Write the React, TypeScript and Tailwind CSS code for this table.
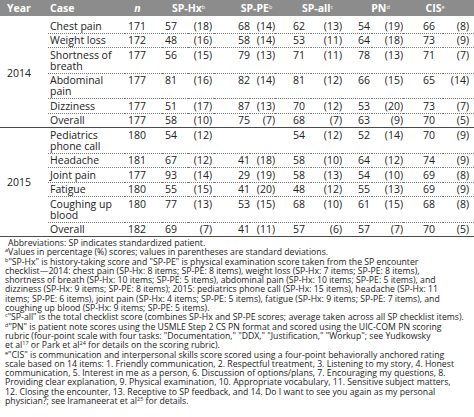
const rows2014 = [
  { name: "Chest pain", n: 171, v: ["57", "(18)", "68", "(14)", "62", "(13)", "54", "(19)", "66", "(8)"] },
  { name: "Weight loss", n: 172, v: ["48", "(16)", "58", "(14)", "53", "(11)", "64", "(18)", "73", "(9)"] },
  { name: "Shortness of breath", n: 177, v: ["56", "(15)", "79", "(13)", "71", "(11)", "78", "(13)", "71", "(7)"] },
  { name: "Abdominal pain", n: 177, v: ["81", "(16)", "82", "(14)", "81", "(12)", "66", "(15)", "65", "(14)"] },
  { name: "Dizziness", n: 177, v: ["51", "(17)", "87", "(13)", "70", "(12)", "53", "(20)", "73", "(7)"] },
  { name: "Overall", n: 177, v: ["58", "(10)", "75", "(7)", "68", "(7)", "63", "(9)", "70", "(5)"] },
];

const rows2015 = [
  { name: "Pediatrics phone call", n: 180, v: ["54", "(12)", "", "", "54", "(12)", "52", "(14)", "70", "(9)"] },
  { name: "Headache", n: 181, v: ["67", "(12)", "41", "(18)", "58", "(10)", "64", "(12)", "74", "(9)"] },
  { name: "Joint pain", n: 177, v: ["93", "(14)", "29", "(19)", "58", "(13)", "54", "(10)", "69", "(8)"] },
  { name: "Fatigue", n: 180, v: ["55", "(15)", "41", "(20)", "48", "(12)", "55", "(13)", "69", "(9)"] },
  { name: "Coughing up blood", n: 180, v: ["77", "(13)", "53", "(15)", "68", "(10)", "61", "(15)", "68", "(8)"] },
  { name: "Overall", n: 182, v: ["69", "(7)", "41", "(11)", "57", "(6)", "57", "(7)", "70", "(5)"] },
];

// padding for each of the ten value cells (mean left, sd right)
const valueCells = [
  "pl-[3px] text-left",
  "pr-[2px] text-right",
  "pl-[24px] text-left",
  "pr-0 text-right",
  "pl-[18px] text-left",
  "pr-0 text-right",
  "pl-[16px] text-left",
  "pr-0 text-right",
  "pl-[20px] text-left",
  "pr-[5px] text-right",
];

const Sup = ({ children }: { children: React.ReactNode }) => (
  <span className="relative -top-[3px] text-[5.5px] leading-none font-normal">{children}</span>
);

const Group = ({ year, rows }: { year: string; rows: typeof rows2014 }) => (
  <>
    {rows.map((r, i) => {
      const last = i === rows.length - 1;
      const line = last ? "border-b border-solid border-[#4a4a4a]" : "border-b border-dotted border-[#7a7a7a]";
      const cell = `${line} align-top pt-[1.5px] pb-[1px]`;
      return (
        <tr key={r.name}>
          {i === 0 && (
            <td rowSpan={rows.length} className="border-b border-solid border-[#4a4a4a] align-middle pl-[7px]">
              {year}
            </td>
          )}
          <td className={`${cell} pl-[2px] pr-[4px]`}>{r.name}</td>
          <td className={`${cell} pl-[3px]`}>{r.n}</td>
          {r.v.map((v, j) => (
            <td key={j} className={`${cell} ${valueCells[j]}`}>
              {v}
            </td>
          ))}
        </tr>
      );
    })}
  </>
);

const notes: React.ReactNode[] = [
  <span className="pl-[3px]">Abbreviations: SP indicates standardized patient.</span>,
  <><Sup>a</Sup>Values in percentage (%) scores; values in parentheses are standard deviations.</>,
  <><Sup>b</Sup>"SP-Hx" is history-taking score and "SP-PE" is physical examination score taken from the SP encounter</>,
  <>checklist—2014: chest pain (SP-Hx: 8 items; SP-PE: 8 items), weight loss (SP-Hx: 7 items; SP-PE: 8 items),</>,
  <>shortness of breath (SP-Hx: 10 items; SP-PE: 5 items), abdominal pain (SP-Hx: 10 items; SP-PE: 5 items), and</>,
  <>dizziness (SP-Hx: 9 items; SP-PE: 8 items); 2015: pediatrics phone call (SP-Hx: 15 items), headache (SP-Hx: 11</>,
  <>items; SP-PE: 6 items), joint pain (SP-Hx: 4 items; SP-PE: 5 items), fatigue (SP-Hx: 9 items; SP-PE: 7 items), and</>,
  <>coughing up blood (SP-Hx: 9 items; SP-PE: 5 items).</>,
  <><Sup>c</Sup>"SP-all" is the total checklist score (combines SP-Hx and SP-PE scores; average taken across all SP checklist items).</>,
  <><Sup>d</Sup>"PN" is patient note scores using the USMLE Step 2 CS PN format and scored using the UIC-COM PN scoring</>,
  <>rubric (four-point scale with four tasks: "Documentation," "DDX," "Justification," "Workup"; see Yudkowsky</>,
  <>et al<Sup>17</Sup> or Park et al<Sup>24</Sup> for details on the scoring rubric).</>,
  <><Sup>e</Sup>"CIS" is communication and interpersonal skills score scored using a four-point behaviorally anchored rating</>,
  <>scale based on 14 items: 1. Friendly communication, 2. Respectful treatment, 3. Listening to my story, 4. Honest</>,
  <>communication, 5. Interest in me as a person, 6. Discussion of options/plans, 7. Encouraging my questions, 8.</>,
  <>Providing clear explanation, 9. Physical examination, 10. Appropriate vocabulary, 11. Sensitive subject matters,</>,
  <>12. Closing the encounter, 13. Receptive to SP feedback, and 14. Do I want to see you again as my personal</>,
  <>physician?; see Iramaneerat et al<Sup>25</Sup> for details.</>,
];

export default function App() {
  return (
    <div className="w-[474px] h-[417px] overflow-hidden bg-white text-[#222] font-['Open_Sans',sans-serif]">
      <table className="w-[474px] table-fixed border-collapse text-[10.5px] leading-[11px]">
        <colgroup>
          <col className="w-[48px]" />
          <col className="w-[77px]" />
          <col className="w-[37px]" />
          <col className="w-[26px]" />
          <col className="w-[26px]" />
          <col className="w-[36px]" />
          <col className="w-[25px]" />
          <col className="w-[36px]" />
          <col className="w-[31px]" />
          <col className="w-[30px]" />
          <col className="w-[31px]" />
          <col className="w-[40px]" />
          <col className="w-[31px]" />
        </colgroup>
        <thead>
          <tr className="bg-[#8c8c8c] text-white h-[16px]">
            <th className="text-left pl-[7px] font-bold">Year</th>
            <th className="text-left pl-[2px] font-bold">Case</th>
            <th className="text-center pl-[3px] pr-[15px] italic font-bold">n</th>
            <th colSpan={2} className="text-center pl-[3px] pr-[2px] font-bold">
              SP-Hx<Sup>b</Sup>
            </th>
            <th colSpan={2} className="text-center pl-[24px] font-bold">
              SP-PE<Sup>b</Sup>
            </th>
            <th colSpan={2} className="text-center pl-[18px] font-bold">
              SP-all<Sup>c</Sup>
            </th>
            <th colSpan={2} className="text-center pl-[16px] font-bold">
              PN<Sup>d</Sup>
            </th>
            <th colSpan={2} className="text-center pl-[20px] pr-[27px] font-bold">
              CIS<Sup>e</Sup>
            </th>
          </tr>
        </thead>
        <tbody>
          <tr className="h-[3px]"><td colSpan={13} /></tr>
          <Group year="2014" rows={rows2014} />
          <Group year="2015" rows={rows2015} />
        </tbody>
      </table>
      <div className="pt-[2px] pl-[5px] text-[8.7px] leading-[9.3px] whitespace-nowrap">
        {notes.map((n, i) => (
          <div key={i}>{n}</div>
        ))}
      </div>
    </div>
  );
}
